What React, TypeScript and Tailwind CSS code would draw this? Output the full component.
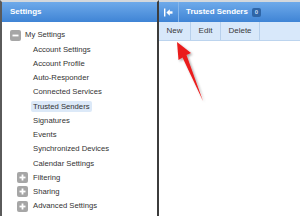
import React from "react";

const font = { fontFamily: "'Liberation Sans', Arial, sans-serif" };

function Box({ minus }: { minus?: boolean }) {
  return (
    <div className="w-[11px] h-[11px] rounded-[2px] bg-[#a6a6a6] flex items-center justify-center shrink-0">
      <svg width="7" height="7" viewBox="0 0 7 7">
        <rect x="0.5" y="2.6" width="6" height="1.8" fill="#fff" />
        {!minus && <rect x="2.6" y="0.5" width="1.8" height="6" fill="#fff" />}
      </svg>
    </div>
  );
}

const children = [
  "Account Settings",
  "Account Profile",
  "Auto-Responder",
  "Connected Services",
  "Trusted Senders",
  "Signatures",
  "Events",
  "Synchronized Devices",
  "Calendar Settings",
];

export default function App() {
  return (
    <div
      className="relative w-[300px] h-[216px] overflow-hidden bg-white flex text-[#333]"
      style={font}
    >
      {/* Left panel */}
      <div className="w-[159px] h-full flex flex-col border-l-2 border-r-2 border-l-[#5a5a5a] border-r-[#3c3c3c] border-t-2 border-t-[#d4d8dc]">
        <div className="h-[20px] bg-gradient-to-b from-[#6eaaea] to-[#3f84d5] flex items-center pl-[8px] text-white font-bold text-[8px]">
          Settings
        </div>
        <div className="flex flex-col pt-[6px] text-[7.7px]">
          <div className="h-[14.25px] flex items-center pl-[8px] gap-[4px]">
            <Box minus />
            <span>My Settings</span>
          </div>
          {children.map((c) => (
            <div key={c} className="h-[14.25px] flex items-center pl-[31px]">
              <span
                className={
                  c === "Trusted Senders"
                    ? "bg-[#dce9f8] rounded-[2px] px-[2px] -ml-[2px] leading-[11px]"
                    : ""
                }
              >
                {c}
              </span>
            </div>
          ))}
          {["Filtering", "Sharing", "Advanced Settings"].map((c) => (
            <div key={c} className="h-[14.25px] flex items-center pl-[15px] gap-[5px]">
              <Box />
              <span>{c}</span>
            </div>
          ))}
        </div>
      </div>

      {/* Right panel */}
      <div className="flex-1 h-full flex flex-col border-t-2 border-t-[#d4d8dc]">
        <div className="h-[20px] bg-gradient-to-b from-[#6eaaea] to-[#3f84d5] flex items-center text-white">
          <div className="w-[20px] h-full flex items-center justify-center border-r border-[#86b6ea]">
            <svg width="9" height="9" viewBox="0 0 9 9">
              <rect x="0" y="0.5" width="1.4" height="8" fill="#fff" />
              <polygon points="2.4,4.5 5.8,1.2 5.8,7.8" fill="#fff" />
              <rect x="5.5" y="3.3" width="3" height="2.4" fill="#fff" />
            </svg>
          </div>
          <span className="ml-[7px] font-bold text-[7.9px]">Trusted Senders</span>
          <span className="ml-[4px] w-[9px] h-[9px] rounded-[2px] bg-[#2f65a6] text-[#c9dcf3] text-[6px] font-bold flex items-center justify-center">
            0
          </span>
        </div>
        <div className="h-[19px] bg-[#d8e8fa] border-b border-[#bcd4ee] flex text-[8px] text-[#3a3a3a]">
          <div className="w-[32px] flex items-center justify-center border-r border-[#b7d0ec]">New</div>
          <div className="w-[30px] flex items-center justify-center border-r border-[#b7d0ec]">Edit</div>
          <div className="w-[39px] flex items-center justify-center border-r border-[#b7d0ec]">Delete</div>
        </div>
        <div className="flex-1 bg-white" />
      </div>

      {/* Red arrow annotation */}
      <svg className="absolute left-0 top-0 pointer-events-none" width="300" height="216" viewBox="0 0 300 216">
        <defs>
          <filter id="sh" x="-50%" y="-50%" width="200%" height="200%">
            <feDropShadow dx="1.5" dy="1.5" stdDeviation="1.2" floodColor="#000" floodOpacity="0.35" />
          </filter>
        </defs>
        <polygon
          points="177,42 191,53 186.5,55 203,101 182.5,57.5 178.5,60"
          fill="#ea1c1c"
          filter="url(#sh)"
        />
      </svg>
    </div>
  );
}
